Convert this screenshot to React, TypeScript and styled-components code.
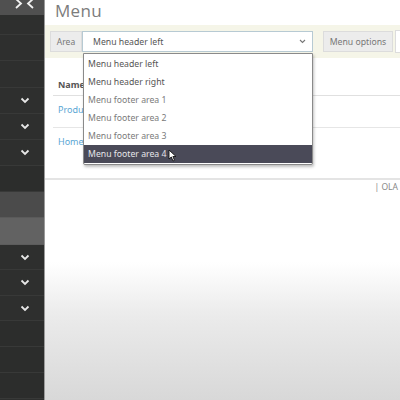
import React from "react";
import styled, { createGlobalStyle } from "styled-components";

const GlobalStyle = createGlobalStyle`
  html, body {
    margin: 0;
    padding: 0;
    width: 400px;
    height: 400px;
    overflow: hidden;
  }
  body {
    font-family: "Noto Sans", "Open Sans", sans-serif;
  }
`;

const options = [
  "Menu header left",
  "Menu header right",
  "Menu footer area 1",
  "Menu footer area 2",
  "Menu footer area 3",
  "Menu footer area 4",
];

type RowKind = "dark" | "plain" | "gray" | "light";

const sideRows: { kind: RowKind; chevron?: boolean; h: number }[] = [
  { kind: "dark", h: 20 },
  { kind: "dark", h: 26 },
  { kind: "dark", h: 27 },
  { kind: "dark", h: 26, chevron: true },
  { kind: "dark", h: 26, chevron: true },
  { kind: "dark", h: 26, chevron: true },
  { kind: "plain", h: 26 },
  { kind: "gray", h: 26 },
  { kind: "light", h: 27 },
  { kind: "dark", h: 25, chevron: true },
  { kind: "dark", h: 26, chevron: true },
  { kind: "dark", h: 25, chevron: true },
  { kind: "plain", h: 26 },
  { kind: "plain", h: 26 },
  { kind: "plain", h: 26 },
];

const Chevron = () => (
  <svg width="10" height="7" viewBox="0 0 10 7">
    <polyline
      points="1.5,1.5 5,5 8.5,1.5"
      fill="none"
      stroke="#e8e8e8"
      strokeWidth="1.8"
    />
  </svg>
);

const CollapseIcon = () => (
  <svg width="20" height="12" viewBox="0 0 20 12">
    <polyline points="1,1 6,5.5 1,10" fill="none" stroke="#f2f2f2" strokeWidth="1.8" />
    <polyline points="18,1 13,5.5 18,10" fill="none" stroke="#f2f2f2" strokeWidth="1.8" />
  </svg>
);

const SelectCaret = () => (
  <svg width="7" height="5" viewBox="0 0 7 5">
    <polyline points="1,1 3.5,3.5 6,1" fill="none" stroke="#777" strokeWidth="1.1" />
  </svg>
);

const Cursor = () => (
  <svg width="9" height="13" viewBox="0 0 9 13">
    <path d="M1 1 L1 10 L3.3 8 L5 12 L6.5 11.3 L4.9 7.5 L8 7.5 Z" fill="#fff" stroke="#111" strokeWidth="0.9" />
  </svg>
);

const App: React.FC = () => {
  const selected = 5;

  return (
    <>
      <GlobalStyle />
      <Page>
        <Sidebar>
          <SideHeader>
            <CollapseIcon />
          </SideHeader>
          {sideRows.map((row, i) => (
            <SideRow key={i} $kind={row.kind} style={{ height: row.h }}>
              {row.chevron && <Chevron />}
            </SideRow>
          ))}
        </Sidebar>

        <Main>
          <Title>Menu</Title>
          <Toolbar>
            <AddOn>Area</AddOn>
            <SelectWrap>
              <SelectBox>
                <span>Menu header left</span>
                <SelectCaret />
              </SelectBox>
              <Dropdown>
                {options.map((opt, i) => (
                  <Option key={opt} $active={i === selected} $dim={i >= 2}>
                    {opt}
                    {i === selected && (
                      <CursorSpot>
                        <Cursor />
                      </CursorSpot>
                    )}
                  </Option>
                ))}
              </Dropdown>
            </SelectWrap>
            <ToolButton>Menu options</ToolButton>
            <ToolInput />
          </Toolbar>

          <Table>
            <HeadRow>Name</HeadRow>
            <BodyRow>Products</BodyRow>
            <BodyRow>Home</BodyRow>
          </Table>

          <Footer>| OLA</Footer>
        </Main>
      </Page>
    </>
  );
};

const Page = styled.div`
  display: flex;
  width: 400px;
  height: 400px;
  overflow: hidden;
`;

const Sidebar = styled.div`
  width: 44px;
  flex-shrink: 0;
  display: flex;
  flex-direction: column;
  background: #2e2f2e;
  border-right: 1px solid #9a9a9a;
`;

const SideHeader = styled.div`
  height: 17px;
  flex-shrink: 0;
  background: #505050;
  display: flex;
  justify-content: flex-end;
  align-items: flex-start;
  padding-right: 9px;
  margin-top: -2px;
`;

const rowBg: Record<RowKind, string> = {
  dark: "#2e2f2e",
  plain: "#2c2d2c",
  gray: "#4b4b4b",
  light: "#626262",
};

const SideRow = styled.div<{ $kind: RowKind }>`
  box-sizing: border-box;
  flex-shrink: 0;
  background: ${(p) => rowBg[p.$kind]};
  border-bottom: 1px solid
    ${(p) => (p.$kind === "gray" ? "#5a5a5a" : p.$kind === "light" ? "#5c5c5c" : "#383938")};
  display: flex;
  align-items: center;
  justify-content: flex-end;
  padding-right: 14px;
`;

const Main = styled.div`
  flex: 1;
  position: relative;
  background: linear-gradient(
    to bottom,
    #ffffff 0px,
    #ffffff 262px,
    #ebebeb 315px,
    #d8d8d8 400px
  );
`;

const Title = styled.div`
  height: 25px;
  padding-left: 10px;
  font-family: "Open Sans", "Noto Sans", sans-serif;
  font-size: 17px;
  line-height: 22px;
  color: #7c7c7c;
  letter-spacing: 0.3px;
`;

const Toolbar = styled.div`
  height: 33px;
  box-sizing: border-box;
  background: #f5f5e8;
  display: flex;
  align-items: center;
  padding: 0 0 0 5px;
`;

const AddOn = styled.div`
  width: 32px;
  height: 21px;
  box-sizing: border-box;
  background: #ececec;
  border: 1px solid #dcdcdc;
  font-size: 8.5px;
  color: #777;
  display: flex;
  align-items: center;
  justify-content: center;
`;

const SelectWrap = styled.div`
  position: relative;
  width: 231px;
  height: 21px;
`;

const SelectBox = styled.div`
  width: 100%;
  height: 100%;
  box-sizing: border-box;
  background: #fff;
  border: 1px solid #b7cad3;
  display: flex;
  align-items: center;
  justify-content: space-between;
  padding: 0 6px 0 10px;
  font-size: 8.7px;
  color: #555;
`;

const Dropdown = styled.div`
  position: absolute;
  left: 1px;
  top: 22px;
  width: 230px;
  box-sizing: border-box;
  background: #fff;
  border: 1px solid #8a8a8a;
  border-radius: 0 0 2px 2px;
  box-shadow: 1px 2px 3px rgba(0, 0, 0, 0.25);
  padding: 1px 0 1px;
  z-index: 2;
`;

const Option = styled.div<{ $active: boolean; $dim: boolean }>`
  position: relative;
  height: 18px;
  line-height: 18px;
  padding-left: 4px;
  font-size: 8.7px;
  color: ${(p) => (p.$active ? "#e6e6ea" : p.$dim ? "#7a7a7a" : "#555")};
  background: ${(p) => (p.$active ? "#4a4a58" : "transparent")};
`;

const CursorSpot = styled.span`
  position: absolute;
  left: 84px;
  top: 4px;
  line-height: 0;
`;

const ToolButton = styled.div`
  margin-left: 10px;
  width: 70px;
  height: 21px;
  box-sizing: border-box;
  background: #ececec;
  border: 1px solid #dcdcdc;
  font-size: 8.7px;
  color: #777;
  display: flex;
  align-items: center;
  justify-content: center;
`;

const ToolInput = styled.div`
  margin-left: 2px;
  flex: 1;
  height: 21px;
  background: #fff;
  border: 1px solid #dcdcdc;
  border-right: none;
`;

const Table = styled.div`
  margin-left: 8px;
  padding-top: 16px;
  display: flex;
  flex-direction: column;
`;

const HeadRow = styled.div`
  height: 22px;
  box-sizing: border-box;
  border-bottom: 1px solid #e0e0e0;
  padding-left: 5px;
  font-size: 9px;
  font-weight: bold;
  color: #555;
  line-height: 22px;
`;

const BodyRow = styled.div`
  height: 32px;
  box-sizing: border-box;
  border-bottom: 1px solid #e6e6e6;
  padding-left: 5px;
  font-size: 9px;
  color: #5aa6d4;
  line-height: 27px;

  &:last-child {
    border-bottom: none;
  }
`;

const Footer = styled.div`
  margin-top: 18px;
  border-top: 2px solid #e4e4e4;
  text-align: right;
  padding-right: 2px;
  font-size: 8.5px;
  color: #888;
  line-height: 14px;
`;

export default App;
